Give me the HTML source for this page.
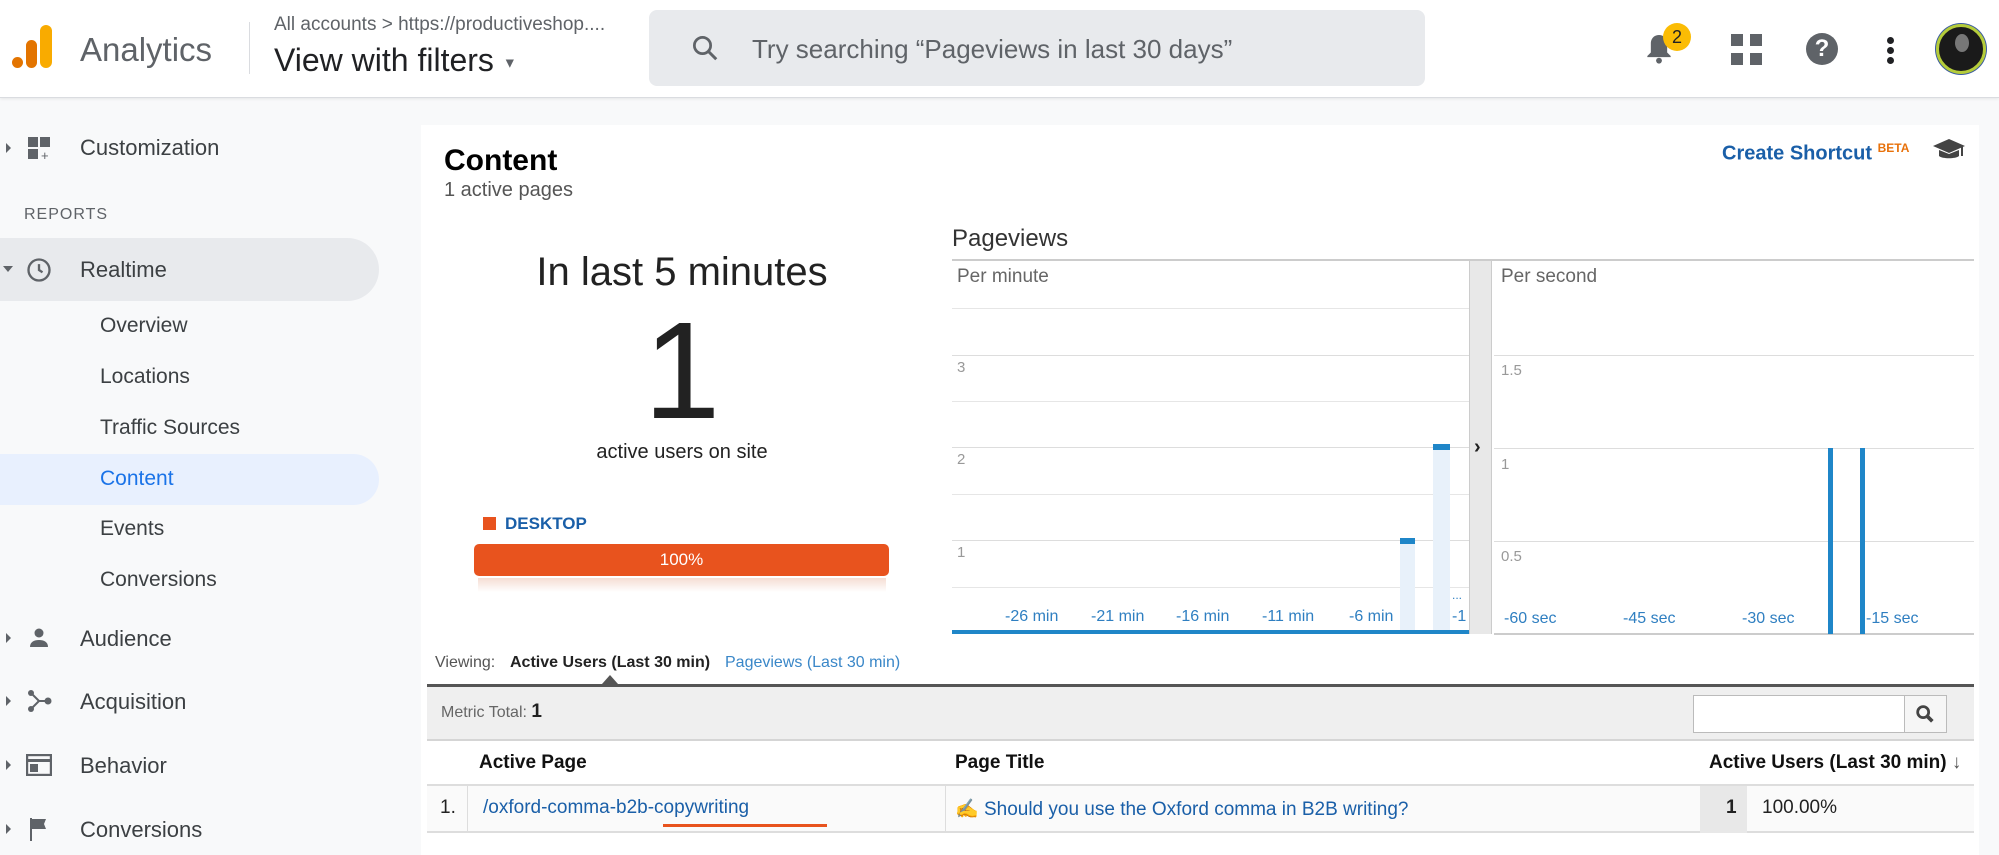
<!DOCTYPE html>
<html><head><meta charset="utf-8"><style>
*{box-sizing:border-box;margin:0;padding:0}
body{width:1999px;height:855px;overflow:hidden;background:#f8f9fa;font-family:"Liberation Sans",sans-serif;position:relative;color:#3c4043}
.a{position:absolute;white-space:nowrap}
#hdr{position:absolute;left:0;top:0;width:1999px;height:98px;background:#fff;border-bottom:1px solid #dadce0;box-shadow:0 1px 3px rgba(0,0,0,.08)}
.side{font-size:22px;color:#3c4043}
.sub{font-size:21px;color:#3c4043;left:100px}
.tri{position:absolute;width:0;height:0;border-top:5px solid transparent;border-bottom:5px solid transparent;border-left:5px solid #5f6368}
#panel{position:absolute;left:421px;top:125px;width:1558px;height:730px;background:#fff}
.gl{position:absolute;height:1px;background:#e6e6e6}
.xl{position:absolute;font-size:16px;color:#2f7fc1;top:608px}
.yl{position:absolute;font-size:15px;color:#999}
</style></head><body>
<div id="hdr"></div>
<!-- logo -->
<div class="a" style="left:12px;top:57px;width:11px;height:11px;border-radius:50%;background:#e37400"></div>
<div class="a" style="left:26px;top:40px;width:11px;height:28px;border-radius:6px;background:#e37400"></div>
<div class="a" style="left:40px;top:25px;width:12px;height:43px;border-radius:6px;background:#f9ab00"></div>
<div class="a" style="left:80px;top:31px;font-size:33px;color:#5f6368">Analytics</div>
<div class="a" style="left:249px;top:22px;width:1px;height:52px;background:#dadce0"></div>
<div class="a" style="left:274px;top:14px;font-size:19px;color:#5f6368">All accounts &gt; https://productiveshop....</div>
<div class="a" style="left:274px;top:42px;font-size:32px;color:#202124">View with filters <span style="font-size:14px;color:#5f6368;vertical-align:middle">▼</span></div>
<div class="a" style="left:649px;top:10px;width:776px;height:76px;background:#e8eaed;border-radius:8px"></div>
<svg class="a" style="left:690px;top:33px" width="30" height="30" viewBox="0 0 24 24"><circle cx="10" cy="10" r="6.5" fill="none" stroke="#5f6368" stroke-width="2.2"/><path d="M15 15l6 6" stroke="#5f6368" stroke-width="2.4"/></svg>
<div class="a" style="left:752px;top:34px;font-size:26px;color:#5f6368">Try searching “Pageviews in last 30 days”</div>
<!-- right icons -->
<svg class="a" style="left:1645px;top:32px" width="28" height="34" viewBox="0 0 24 28"><path d="M12 2c-4 0-7 3-7 7v8l-3 3v1h20v-1l-3-3V9c0-4-3-7-7-7z" fill="#5f6368"/><circle cx="12" cy="24" r="2.5" fill="#5f6368"/></svg>
<div class="a" style="left:1663px;top:23px;width:28px;height:28px;border-radius:50%;background:#fbbc04;font-size:18px;color:#202124;text-align:center;line-height:28px">2</div>
<div class="a" style="left:1731px;top:34px;width:12px;height:12px;background:#5f6368"></div>
<div class="a" style="left:1750px;top:34px;width:12px;height:12px;background:#5f6368"></div>
<div class="a" style="left:1731px;top:53px;width:12px;height:12px;background:#5f6368"></div>
<div class="a" style="left:1750px;top:53px;width:12px;height:12px;background:#5f6368"></div>
<div class="a" style="left:1806px;top:33px;width:32px;height:32px;border-radius:50%;background:#5f6368;color:#fff;font-weight:bold;font-size:24px;text-align:center;line-height:32px">?</div>
<div class="a" style="left:1887px;top:37px;width:7px;height:7px;border-radius:50%;background:#202124"></div>
<div class="a" style="left:1887px;top:47px;width:7px;height:7px;border-radius:50%;background:#202124"></div>
<div class="a" style="left:1887px;top:57px;width:7px;height:7px;border-radius:50%;background:#202124"></div>
<div class="a" style="left:1936px;top:24px;width:50px;height:50px;border-radius:50%;background:#1a1a1a;border:3px solid #b5cc3a;box-shadow:0 0 0 1px #3a5aa0"></div>
<div class="a" style="left:1955px;top:34px;width:14px;height:18px;border-radius:50%;background:#777"></div>
<!-- sidebar -->
<div class="tri" style="left:6px;top:143px"></div>
<div class="a" style="left:28px;top:137px;width:10px;height:10px;background:#5f6368"></div>
<div class="a" style="left:40px;top:137px;width:10px;height:10px;background:#5f6368"></div>
<div class="a" style="left:28px;top:149px;width:10px;height:10px;background:#5f6368"></div>
<div class="a" style="left:41px;top:148px;font-size:13px;color:#5f6368">+</div>
<div class="a side" style="left:80px;top:135px">Customization</div>
<div class="a" style="left:24px;top:206px;font-size:16px;color:#5f6368;letter-spacing:1px">REPORTS</div>
<div class="a" style="left:0;top:238px;width:379px;height:63px;background:#e8eaed;border-radius:0 32px 32px 0"></div>
<div class="a" style="left:3px;top:266px;border-left:5px solid transparent;border-right:5px solid transparent;border-top:6px solid #5f6368;width:0;height:0"></div>
<svg class="a" style="left:25px;top:256px" width="28" height="28" viewBox="0 0 24 24"><circle cx="12" cy="12" r="9" fill="none" stroke="#5f6368" stroke-width="2"/><path d="M12 7v5l3 2" fill="none" stroke="#5f6368" stroke-width="2"/></svg>
<div class="a side" style="left:80px;top:257px">Realtime</div>
<div class="a sub" style="top:314px">Overview</div>
<div class="a sub" style="top:365px">Locations</div>
<div class="a sub" style="top:416px">Traffic Sources</div>
<div class="a" style="left:0;top:454px;width:379px;height:51px;background:#e8f0fe;border-radius:0 26px 26px 0"></div>
<div class="a sub" style="top:467px;color:#1a73e8">Content</div>
<div class="a sub" style="top:517px">Events</div>
<div class="a sub" style="top:568px">Conversions</div>
<div class="tri" style="left:6px;top:633px"></div>
<svg class="a" style="left:27px;top:626px" width="24" height="24" viewBox="0 0 24 24"><circle cx="12" cy="7" r="4.5" fill="#5f6368"/><path d="M3 21c0-5 4-7 9-7s9 2 9 7z" fill="#5f6368"/></svg>
<div class="a side" style="left:80px;top:626px">Audience</div>
<div class="tri" style="left:6px;top:696px"></div>
<svg class="a" style="left:27px;top:689px" width="26" height="24" viewBox="0 0 26 24"><circle cx="4" cy="4" r="3" fill="#5f6368"/><circle cx="4" cy="20" r="3" fill="#5f6368"/><circle cx="21" cy="12" r="3.5" fill="#5f6368"/><path d="M4 4l8 8h9M4 20l8-8" stroke="#5f6368" stroke-width="2" fill="none"/></svg>
<div class="a side" style="left:80px;top:689px">Acquisition</div>
<div class="tri" style="left:6px;top:760px"></div>
<svg class="a" style="left:26px;top:754px" width="26" height="22" viewBox="0 0 26 22"><rect x="1" y="1" width="24" height="20" fill="none" stroke="#5f6368" stroke-width="2.4"/><rect x="1" y="5" width="24" height="3" fill="#5f6368"/><rect x="4" y="10" width="8" height="8" fill="#5f6368"/></svg>
<div class="a side" style="left:80px;top:753px">Behavior</div>
<div class="tri" style="left:6px;top:824px"></div>
<svg class="a" style="left:28px;top:817px" width="22" height="24" viewBox="0 0 22 24"><path d="M2 1h2v23H2zM4 2h14l-2 5 2 5H4z" fill="#5f6368"/></svg>
<div class="a side" style="left:80px;top:817px">Conversions</div>
<!-- panel -->
<div id="panel"></div>
<div class="a" style="left:444px;top:144px;font-size:30px;font-weight:bold;color:#000">Content</div>
<div class="a" style="left:444px;top:179px;font-size:20px;color:#555">1 active pages</div>
<div class="a" style="left:1722px;top:141px;font-size:20px;font-weight:bold;color:#1a5fa8">Create Shortcut <sup style="font-size:12px;color:#e8710a">BETA</sup></div>
<svg class="a" style="left:1932px;top:137px" width="34" height="26" viewBox="0 0 34 26"><path d="M17 2L1 9l16 7 16-7z" fill="#444"/><path d="M7 13v6c3 3 17 3 20 0v-6l-10 4z" fill="#444"/><path d="M30 10v9" stroke="#444" stroke-width="2"/></svg>
<div class="a" style="left:474px;top:250px;width:416px;text-align:center;font-size:40px;color:#222">In last 5 minutes</div>
<div class="a" style="left:474px;top:302px;width:416px;text-align:center;font-size:138px;color:#222;line-height:1">1</div>
<div class="a" style="left:474px;top:441px;width:416px;text-align:center;font-size:20px;color:#222">active users on site</div>
<div class="a" style="left:483px;top:517px;width:13px;height:13px;background:#e8531e"></div>
<div class="a" style="left:505px;top:514px;font-size:17px;font-weight:bold;color:#1a5fa8">DESKTOP</div>
<div class="a" style="left:474px;top:544px;width:415px;height:32px;background:#e8531e;border-radius:5px;color:#fff;font-size:17px;text-align:center;line-height:32px">100%</div>
<div class="a" style="left:478px;top:578px;width:408px;height:14px;background:linear-gradient(#f5ddd3,#fff)"></div>
<!-- chart -->
<div class="a" style="left:952px;top:225px;font-size:24px;color:#333">Pageviews</div>
<div class="a" style="left:952px;top:259px;width:1022px;height:2px;background:#ccc"></div>
<div class="a" style="left:1469px;top:261px;width:23px;height:373px;background:#e8e8e8;border-left:1px solid #ccc;border-right:1px solid #ccc"></div>
<div class="a" style="left:1474px;top:436px;font-size:20px;font-weight:bold;color:#222">›</div>
<div class="a" style="left:957px;top:266px;font-size:19px;color:#666">Per minute</div>
<div class="a" style="left:1501px;top:266px;font-size:19px;color:#666">Per second</div>
<div class="gl" style="left:952px;width:517px;top:308px"></div>
<div class="gl" style="left:952px;width:517px;top:355px;background:#ddd"></div>
<div class="gl" style="left:952px;width:517px;top:401px"></div>
<div class="gl" style="left:952px;width:517px;top:447px;background:#ddd"></div>
<div class="gl" style="left:952px;width:517px;top:494px"></div>
<div class="gl" style="left:952px;width:517px;top:540px;background:#ddd"></div>
<div class="gl" style="left:952px;width:517px;top:587px"></div>
<div class="gl" style="left:1494px;width:480px;top:355px;background:#ddd"></div>
<div class="gl" style="left:1494px;width:480px;top:448px;background:#ddd"></div>
<div class="gl" style="left:1494px;width:480px;top:541px;background:#ddd"></div>
<div class="a" style="left:1494px;top:633px;width:480px;height:2px;background:#ccc"></div>
<div class="yl" style="left:957px;top:359px">3</div>
<div class="yl" style="left:957px;top:451px">2</div>
<div class="yl" style="left:957px;top:544px">1</div>
<div class="yl" style="left:1501px;top:362px">1.5</div>
<div class="yl" style="left:1501px;top:456px">1</div>
<div class="yl" style="left:1501px;top:548px">0.5</div>
<div class="a" style="left:1400px;top:538px;width:15px;height:96px;background:#e8f1fa"></div>
<div class="a" style="left:1400px;top:538px;width:15px;height:6px;background:#1f86c8"></div>
<div class="a" style="left:1433px;top:444px;width:17px;height:190px;background:#e8f1fa"></div>
<div class="a" style="left:1433px;top:444px;width:17px;height:6px;background:#1f86c8"></div>
<div class="a" style="left:952px;top:630px;width:517px;height:4px;background:#1f86c8"></div>
<div class="a" style="left:1828px;top:448px;width:5px;height:186px;background:#1f86c8"></div>
<div class="a" style="left:1860px;top:448px;width:5px;height:186px;background:#1f86c8"></div>
<div class="xl" style="left:1005px">-26 min</div>
<div class="xl" style="left:1091px">-21 min</div>
<div class="xl" style="left:1176px">-16 min</div>
<div class="xl" style="left:1262px">-11 min</div>
<div class="xl" style="left:1349px">-6 min</div>
<div class="xl" style="left:1452px">-1</div>
<div class="xl" style="left:1452px;top:588px;font-size:12px">...</div>
<div class="xl" style="left:1504px;top:610px">-60 sec</div>
<div class="xl" style="left:1623px;top:610px">-45 sec</div>
<div class="xl" style="left:1742px;top:610px">-30 sec</div>
<div class="xl" style="left:1866px;top:610px">-15 sec</div>
<!-- table -->
<div class="a" style="left:435px;top:654px;font-size:16px;color:#555">Viewing:</div>
<div class="a" style="left:510px;top:654px;font-size:16px;font-weight:bold;color:#222">Active Users (Last 30 min)</div>
<div class="a" style="left:725px;top:654px;font-size:16px;color:#3a87c8">Pageviews (Last 30 min)</div>
<div class="a" style="left:602px;top:675px;border-left:8px solid transparent;border-right:8px solid transparent;border-bottom:9px solid #555;width:0;height:0"></div>
<div class="a" style="left:427px;top:684px;width:1547px;height:57px;background:#efefef;border-top:3px solid #555;border-bottom:2px solid #d5d5d5"></div>
<div class="a" style="left:441px;top:701px;font-size:16px;color:#666">Metric Total: <b style="color:#222;font-size:19px">1</b></div>
<div class="a" style="left:1693px;top:695px;width:212px;height:38px;background:#fff;border:1px solid #bbb"></div>
<div class="a" style="left:1904px;top:695px;width:43px;height:38px;background:#f6f6f6;border:1px solid #bbb"></div>
<svg class="a" style="left:1914px;top:703px" width="22" height="22" viewBox="0 0 24 24"><circle cx="10" cy="10" r="6" fill="none" stroke="#444" stroke-width="3"/><path d="M14 14l6 6" stroke="#444" stroke-width="4"/></svg>
<div class="a" style="left:427px;top:741px;width:1547px;height:45px;background:#fff;border-bottom:2px solid #ddd"></div>
<div class="a" style="left:479px;top:752px;font-size:19px;font-weight:bold;color:#111">Active Page</div>
<div class="a" style="left:955px;top:752px;font-size:19px;font-weight:bold;color:#111">Page Title</div>
<div class="a" style="left:1709px;top:752px;font-size:19px;font-weight:bold;color:#111">Active Users (Last 30 min) <span style="font-weight:normal;color:#555">↓</span></div>
<div class="a" style="left:427px;top:786px;width:1547px;height:47px;background:#fafafa;border-bottom:2px solid #ddd"></div>
<div class="a" style="left:467px;top:786px;width:1px;height:47px;background:#ddd"></div>
<div class="a" style="left:945px;top:786px;width:1px;height:47px;background:#ddd"></div>
<div class="a" style="left:1700px;top:786px;width:47px;height:47px;background:#e8e8e8"></div>
<div class="a" style="left:440px;top:797px;font-size:19px;color:#222">1.</div>
<div class="a" style="left:483px;top:797px;font-size:19px;color:#1a5fa8">/oxford-comma-b2b-copywriting</div>
<div class="a" style="left:663px;top:824px;width:164px;height:3px;background:#e8531e"></div>
<div class="a" style="left:955px;top:797px;font-size:19px;color:#1a5fa8"><span style="color:#e8a000">✍</span> Should you use the Oxford comma in B2B writing?</div>
<div class="a" style="left:1726px;top:797px;font-size:19px;font-weight:bold;color:#222">1</div>
<div class="a" style="left:1762px;top:797px;font-size:19px;color:#222">100.00%</div>
</body></html>
